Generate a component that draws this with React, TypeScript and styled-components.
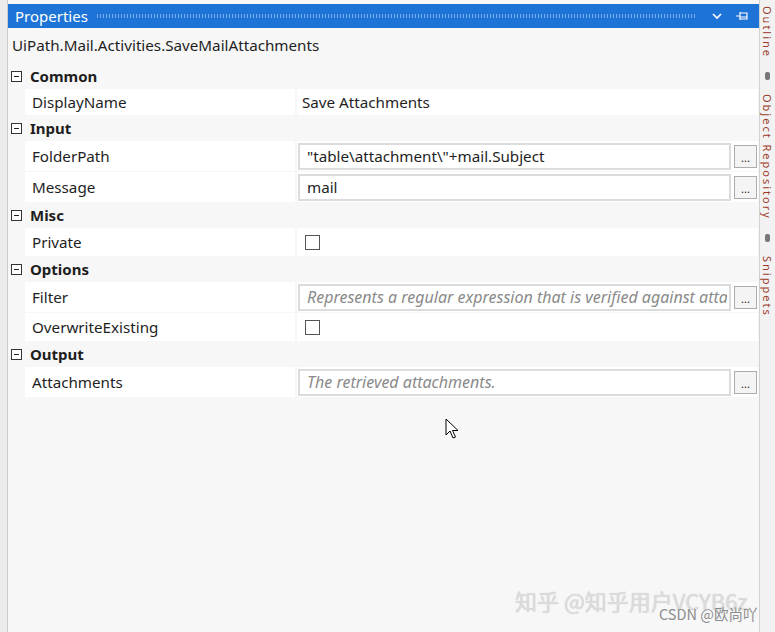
import React from "react";
import styled, { createGlobalStyle } from "styled-components";

const GlobalStyle = createGlobalStyle`
  html, body {
    margin: 0;
    padding: 0;
    background: #f0f0f0;
  }
  body {
    font-family: "Noto Sans", "Open Sans", sans-serif;
    color: #1e1e1e;
  }
`;

type Prop =
  | { kind: "text"; label: string; value: string }
  | { kind: "box"; label: string; value: string; hint?: boolean }
  | { kind: "check"; label: string };

const groups: { title: string; props: Prop[] }[] = [
  { title: "Common", props: [{ kind: "text", label: "DisplayName", value: "Save Attachments" }] },
  {
    title: "Input",
    props: [
      { kind: "box", label: "FolderPath", value: '"table\\attachment\\"+mail.Subject' },
      { kind: "box", label: "Message", value: "mail" },
    ],
  },
  { title: "Misc", props: [{ kind: "check", label: "Private" }] },
  {
    title: "Options",
    props: [
      {
        kind: "box",
        label: "Filter",
        value: "Represents a regular expression that is verified against attachment names",
        hint: true,
      },
      { kind: "check", label: "OverwriteExisting" },
    ],
  },
  {
    title: "Output",
    props: [{ kind: "box", label: "Attachments", value: "The retrieved attachments.", hint: true }],
  },
];

export default function App() {
  return (
    <>
      <GlobalStyle />
      <Shell>
        <LeftGutter />
        <Panel>
          <Header>
            <Title>Properties</Title>
            <Dots />
            <HeaderIcon width="12" height="12" viewBox="0 0 12 12">
              <path d="M2 4 L6 8 L10 4" stroke="#fff" strokeWidth="1.6" fill="none" />
            </HeaderIcon>
            <HeaderIcon width="14" height="12" viewBox="0 0 14 12">
              <path d="M1 6 H5 M5 2 V10 M5 3 H12 V9 H5 M5 7 H12" stroke="#fff" strokeWidth="1.2" fill="none" />
            </HeaderIcon>
          </Header>
          <Subtitle>UiPath.Mail.Activities.SaveMailAttachments</Subtitle>
          <Grid>
            {groups.map((g) => (
              <React.Fragment key={g.title}>
                <Category>
                  <Toggle>
                    <span />
                  </Toggle>
                  {g.title}
                </Category>
                {g.props.map((p) => (
                  <Row key={p.label} $tall={p.kind === "box"} $check={p.kind === "check"}>
                    <Label>{p.label}</Label>
                    <Value>
                      {p.kind === "text" && <PlainValue>{p.value}</PlainValue>}
                      {p.kind === "check" && <CheckBox />}
                      {p.kind === "box" && (
                        <>
                          <TextBox $hint={p.hint}>
                            <BoxText>{p.value}</BoxText>
                          </TextBox>
                          <EllipsisButton>...</EllipsisButton>
                        </>
                      )}
                    </Value>
                  </Row>
                ))}
              </React.Fragment>
            ))}
          </Grid>
          <Cursor width="14" height="22" viewBox="0 0 14 22">
            <path d="M1 1 V17 L5 13 L8 20 L10.5 19 L7.5 12.5 L13 12.5 Z" fill="#fff" stroke="#000" strokeWidth="1" />
          </Cursor>
          <Watermark>知乎 @知乎用户VCYB6z</Watermark>
          <Credit>CSDN @欧尚吖</Credit>
        </Panel>
        <RightStrip>
          <StripLabel>Outline</StripLabel>
          <StripIcon />
          <StripLabel>Object Repository</StripLabel>
          <StripIcon />
          <StripLabel>Snippets</StripLabel>
        </RightStrip>
      </Shell>
    </>
  );
}

const Shell = styled.div`
  display: flex;
  height: 632px;
  width: 775px;
  overflow: hidden;
`;

const LeftGutter = styled.div`
  width: 7px;
  background: #ececec;
  border-right: 1px solid #cdcdcd;
`;

const Panel = styled.div`
  position: relative;
  width: 752px;
  padding-top: 4px;
  background: #f7f7f7;
  display: flex;
  flex-direction: column;
`;

const Header = styled.div`
  height: 24px;
  background: #1e73d6;
  display: flex;
  align-items: center;
  padding: 0 10px 0 7px;
  gap: 8px;
`;

const Title = styled.div`
  color: #fff;
  font-size: 15px;
  line-height: 24px;
`;

const Dots = styled.div`
  flex: 1;
  height: 4px;
  margin: 0 4px 0 0;
  background-image: radial-gradient(circle, #7fb0ec 0.7px, transparent 1px);
  background-size: 3px 2px;
`;

const HeaderIcon = styled.svg`
  display: block;
  margin-left: 4px;
`;

const Subtitle = styled.div`
  height: 34px;
  line-height: 34px;
  padding-left: 4px;
  font-size: 15.2px;
  margin-bottom: 2px;
`;

const Grid = styled.div`
  display: flex;
  flex-direction: column;
  gap: 1px;
`;

const Category = styled.div`
  height: 24px;
  display: flex;
  align-items: center;
  gap: 8px;
  padding-left: 3px;
  font-weight: 700;
  font-size: 15px;
`;

const Toggle = styled.div`
  width: 9px;
  height: 9px;
  border: 1px solid #333;
  position: relative;
  background: #fff;
  span {
    position: absolute;
    left: 2px;
    right: 2px;
    top: 4px;
    height: 1px;
    background: #222;
  }
`;

const Row = styled.div<{ $tall?: boolean; $check?: boolean }>`
  height: ${(p) => (p.$tall ? 30 : p.$check ? 28 : 26)}px;
  display: grid;
  grid-template-columns: 270px 461px;
  column-gap: 2px;
  margin-left: 17px;
`;

const Label = styled.div`
  background: #fff;
  display: flex;
  align-items: center;
  padding-left: 7px;
  font-size: 15.2px;
`;

const Value = styled.div`
  background: #fff;
  display: flex;
  align-items: center;
  gap: 3px;
  padding-left: 1px;
  min-width: 0;
`;

const PlainValue = styled.div`
  padding-left: 4px;
  font-size: 15.2px;
`;

const CheckBox = styled.div`
  width: 13px;
  height: 13px;
  border: 1px solid #555;
  margin-left: 7px;
  background: #fff;
`;

const TextBox = styled.div<{ $hint?: boolean }>`
  width: 433px;
  height: 27px;
  box-sizing: border-box;
  border: 2px solid #dcdcdc;
  padding: 0 2px 0 7px;
  display: flex;
  align-items: center;
  font-size: ${(p) => (p.$hint ? 16 : 15.2)}px;
  font-style: ${(p) => (p.$hint ? "italic" : "normal")};
  color: ${(p) => (p.$hint ? "#8a8a8a" : "#1e1e1e")};
`;

const BoxText = styled.div`
  white-space: nowrap;
  overflow: hidden;
  min-width: 0;
  flex: 1;
`;

const EllipsisButton = styled.div`
  width: 23px;
  height: 23px;
  box-sizing: border-box;
  border: 1px solid #acacac;
  background: #f4f4f4;
  font-size: 11px;
  text-align: center;
  line-height: 24px;
  color: #222;
`;

const Cursor = styled.svg`
  position: absolute;
  left: 437px;
  top: 418px;
`;

const Watermark = styled.div`
  position: absolute;
  left: 507px;
  top: 584px;
  font-size: 22px;
  color: #dcdcdc;
  font-family: "Noto Sans CJK SC", "Noto Sans", sans-serif;
  text-shadow: 0 0 1px #c4c4c4;
  white-space: nowrap;
`;

const Credit = styled.div`
  position: absolute;
  left: 651px;
  top: 603px;
  font-size: 14.5px;
  color: #8e8e8e;
  font-family: "Noto Sans CJK SC", "Noto Sans", sans-serif;
  white-space: nowrap;
`;

const RightStrip = styled.div`
  flex: 1;
  background: #f2f2f2;
  border-left: 1px solid #d2d2d2;
  display: flex;
  flex-direction: column;
  align-items: center;
  gap: 14px;
  padding-top: 6px;
`;

const StripLabel = styled.div`
  writing-mode: vertical-rl;
  font-size: 11px;
  color: #9c3b2a;
  font-family: "Noto Sans", sans-serif;
  letter-spacing: 2px;
`;

const StripIcon = styled.div`
  width: 5px;
  height: 8px;
  background: #777;
  border-radius: 2px;
`;
